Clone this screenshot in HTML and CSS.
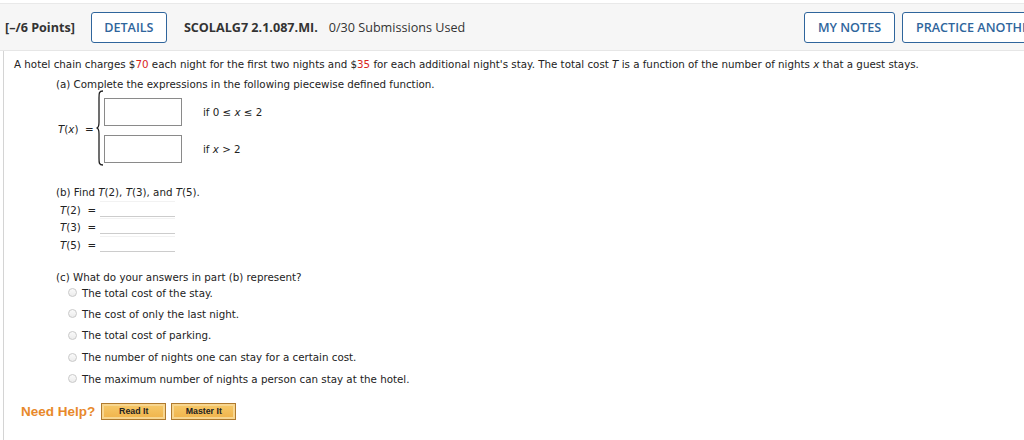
FILE: index.html
```html
<!DOCTYPE html>
<html>
<head>
<meta charset="utf-8">
<link rel="stylesheet" href="styles.css">
</head>
<body>
<div class="page">
  <div class="header">
    <span class="points">[–/6 Points]</span>
    <span class="btn details">DETAILS</span>
    <span class="code">SCOLALG7 2.1.087.MI.</span>
    <span class="subs">0/30 Submissions Used</span>
    <span class="spacer"></span>
    <span class="btn notes">MY NOTES</span>
    <span class="btn practice">PRACTICE ANOTHER</span>
  </div>
  <div class="body">
    <p class="intro">A hotel chain charges $<span class="red">70</span> each night for the first two nights and $<span class="red">35</span> for each additional night's stay. The total cost <i>T</i> is a function of the number of nights <i>x</i> that a guest stays.</p>
    <div class="part">
      <p class="q">(a) Complete the expressions in the following piecewise defined function.</p>
      <div class="piece">
        <span class="lhs"><i>T</i>(<i>x</i>) &nbsp;=</span>
        <svg class="brace" width="8" height="76" viewBox="0 0 8 76"><path d="M7 1 C3 1 3 3 3 8 L3 32 C3 36 2 38 0.5 38 C2 38 3 40 3 44 L3 68 C3 73 3 75 7 75" fill="none" stroke="#222" stroke-width="1.3"/></svg>
        <div class="cases">
          <div class="case"><span class="box"></span><span class="cond">if 0 ≤ <i>x</i> ≤ 2</span></div>
          <div class="case"><span class="box"></span><span class="cond">if <i>x</i> &gt; 2</span></div>
        </div>
      </div>
      <p class="q qb">(b) Find <i>T</i>(2), <i>T</i>(3), and <i>T</i>(5).</p>
      <div class="evals">
        <div class="ev"><span class="evl"><i>T</i>(2) &nbsp;=</span><span class="line"></span></div>
        <div class="ev"><span class="evl"><i>T</i>(3) &nbsp;=</span><span class="line"></span></div>
        <div class="ev"><span class="evl"><i>T</i>(5) &nbsp;=</span><span class="line"></span></div>
      </div>
      <p class="q qc">(c) What do your answers in part (b) represent?</p>
      <div class="opts">
        <div class="opt"><span class="radio"></span>The total cost of the stay.</div>
        <div class="opt"><span class="radio"></span>The cost of only the last night.</div>
        <div class="opt"><span class="radio"></span>The total cost of parking.</div>
        <div class="opt"><span class="radio"></span>The number of nights one can stay for a certain cost.</div>
        <div class="opt"><span class="radio"></span>The maximum number of nights a person can stay at the hotel.</div>
      </div>
    </div>
    <div class="help">
      <span class="need">Need Help?</span>
      <span class="hbtn">Read It</span>
      <span class="hbtn">Master It</span>
    </div>
  </div>
</div>
</body>
</html>
```
FILE: styles.css
```css
html, body { margin: 0; padding: 0; background: #fff; }
body { width: 1024px; height: 440px; overflow: hidden; }
.page { padding-top: 3px; }
.header {
  display: flex;
  align-items: center;
  height: 46px;
  background: #f6f6f6;
  border-top: 1px solid #e9e9e9;
  border-bottom: 1px solid #e6e6e6;
  font-family: "Open Sans", sans-serif;
  font-size: 12.6px;
  color: #333;
  white-space: nowrap;
  padding-left: 5px;
  overflow: hidden;
}
.points { font-weight: 700; margin-right: 16px; }
.btn {
  box-sizing: border-box;
  height: 31px;
  line-height: 29px;
  border: 1px solid #2f659c;
  border-radius: 3px;
  color: #2f659c;
  background: #fff;
  font-weight: 600;
  flex: none;
  text-align: center;
}
.details { width: 76px; margin-right: 17px; }
.code { font-weight: 700; margin-right: 11px; }
.subs { font-weight: 400; }
.spacer { flex: 1; }
.notes { width: 91px; margin-right: 7px; }
.practice { width: 150px; margin-right: -28px; text-align: left; padding-left: 13px; }
.body {
  border-left: 1px solid #d4d4d4;
  margin-left: 3px;
  height: 390px;
  font-family: "DejaVu Sans", Verdana, sans-serif;
  font-size: 10.3px;
  color: #222;
}
.body p { margin: 0; }
.intro { padding: 7px 0 0 10px; }
.red { color: #d9241c; }
.part { padding-left: 52px; }
.q { padding-top: 8px; }
.piece { display: flex; align-items: center; margin-top: 2px; }
.lhs { width: 38px; padding-left: 2px; }
.brace { display: block; margin-top: -2px; }
.cases { display: flex; flex-direction: column; gap: 9px; padding-top: 3px; }
.case { display: flex; align-items: center; }
.box {
  width: 76px; height: 26px;
  border: 1px solid #8a8a8a;
  display: inline-block;
  margin-right: 21px;
}
.qb { padding-top: 20px; }
.evals { display: flex; flex-direction: column; margin-top: 1px; }
.ev { display: flex; align-items: flex-end; height: 17.6px; }
.evl { width: 40px; padding-left: 4px; padding-bottom: 1px; }
.line { width: 75px; height: 16px; border-bottom: 1px solid #ccc; border-top: 1px solid #f2f2f2; box-sizing: border-box; }
.qc { padding-top: 19px; }
.opts { padding-left: 12px; }
.opt { display: flex; align-items: center; height: 21.7px; }
.opt:first-child { height: 20px; }
.radio {
  box-sizing: border-box;
  width: 9px; height: 9px;
  border: 1px solid #c9c9c9;
  border-radius: 50%;
  margin-right: 5px;
  background: linear-gradient(#fafafa, #ececec);
}
.help {
  display: flex; align-items: center;
  padding-left: 17px;
  margin-top: 13px;
  font-family: "Liberation Sans", Arial, sans-serif;
}
.need { color: #e8892b; font-weight: 700; font-size: 13.5px; margin-right: 6px; }
.hbtn {
  box-sizing: border-box;
  width: 65px; height: 17px;
  border: 1px solid #b07a2e;
  background: linear-gradient(#f6c96a, #f0b34a);
  box-shadow: inset 0 0 0 2px #f7d690;
  font-size: 8.8px; font-weight: 700; color: #222;
  text-align: center; line-height: 15px;
  margin-right: 5px;
}
```
